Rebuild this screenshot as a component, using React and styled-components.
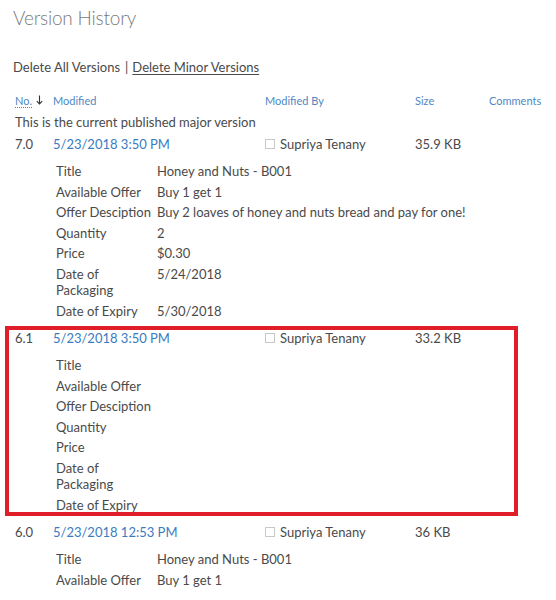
import React from 'react';
import styled, { createGlobalStyle } from 'styled-components';

const versions = [
  {
    no: '7.0',
    modified: '5/23/2018 3:50 PM',
    by: 'Supriya Tenany',
    size: '35.9 KB',
    fields: [
      ['Title', 'Honey and Nuts - B001'],
      ['Available Offer', 'Buy 1 get 1'],
      ['Offer Desciption', 'Buy 2 loaves of honey and nuts bread and pay for one!'],
      ['Quantity', '2'],
      ['Price', '$0.30'],
      ['Date of Packaging', '5/24/2018'],
      ['Date of Expiry', '5/30/2018'],
    ],
  },
  {
    no: '6.1',
    modified: '5/23/2018 3:50 PM',
    by: 'Supriya Tenany',
    size: '33.2 KB',
    highlighted: true,
    fields: [
      ['Title', ''],
      ['Available Offer', ''],
      ['Offer Desciption', ''],
      ['Quantity', ''],
      ['Price', ''],
      ['Date of Packaging', ''],
      ['Date of Expiry', ''],
    ],
  },
  {
    no: '6.0',
    modified: '5/23/2018 12:53 PM',
    by: 'Supriya Tenany',
    size: '36 KB',
    fields: [
      ['Title', 'Honey and Nuts - B001'],
      ['Available Offer', 'Buy 1 get 1'],
    ],
  },
];

const SortArrow = () => (
  <svg width="7" height="10" viewBox="0 0 7 10">
    <path d="M3.5 0.5 V9 M0.8 6.2 L3.5 9 L6.2 6.2" stroke="#333" strokeWidth="1.1" fill="none" />
  </svg>
);

const App = () => {
  return (
    <Page>
      <GlobalStyle />
      <Title>Version History</Title>
      <Actions>
        <span>Delete All Versions</span>
        <Divider>|</Divider>
        <ActionLink>Delete Minor Versions</ActionLink>
      </Actions>
      <Table>
        <HeaderRow>
          <HeaderCell>
            <NoLink>No.</NoLink>
            <SortArrow />
          </HeaderCell>
          <HeaderCell>Modified</HeaderCell>
          <HeaderCell>Modified By</HeaderCell>
          <HeaderCell>Size</HeaderCell>
          <HeaderCell>Comments</HeaderCell>
        </HeaderRow>
        <Note>This is the current published major version</Note>
        {versions.map((v) => (
          <Group key={v.no} highlighted={v.highlighted}>
            <VersionRow>
              <span>{v.no}</span>
              <DateLink>{v.modified}</DateLink>
              <Author>
                <Check />
                {v.by}
              </Author>
              <span>{v.size}</span>
              <span />
            </VersionRow>
            <Details>
              {v.fields.map(([label, value]) => (
                <DetailRow key={label}>
                  <Label>{label}</Label>
                  <span>{value}</span>
                </DetailRow>
              ))}
            </Details>
          </Group>
        ))}
      </Table>
    </Page>
  );
};

const GlobalStyle = createGlobalStyle`
  body {
    margin: 0;
    background: #ffffff;
    font-family: "Segoe UI", Lato, sans-serif;
    color: #4a4a4a;
  }
`;

const Page = styled.div`
  width: 556px;
  height: 600px;
  overflow: hidden;
  padding: 5px 0 0 13px;
  box-sizing: border-box;
`;

const Title = styled.h1`
  margin: 0;
  font-size: 19px;
  line-height: 26px;
  font-weight: 300;
  letter-spacing: -0.2px;
  color: #7a7a7a;
`;

const Actions = styled.div`
  margin-top: 26px;
  font-size: 13px;
  line-height: 20px;
  color: #4a4a4a;
`;

const Divider = styled.span`
  margin: 0 4px 0 5px;
`;

const ActionLink = styled.span`
  text-decoration: underline;
  text-underline-offset: 2px;
`;

const Table = styled.div`
  margin: 12px 0 0 2px;
  font-size: 13px;
`;

const columns = '38px 212px 150px 74px 1fr';

const HeaderRow = styled.div`
  display: grid;
  grid-template-columns: ${columns};
  height: 22px;
  align-items: center;
`;

const HeaderCell = styled.div`
  display: flex;
  align-items: center;
  gap: 4px;
  font-size: 11px;
  color: #4f88c4;
`;

const NoLink = styled.span`
  text-decoration: underline dotted;
  text-underline-offset: 2px;
`;

const Note = styled.div`
  height: 22px;
  line-height: 22px;
  color: #4a4a4a;
`;

const Group = styled.div`
  position: relative;

  &::after {
    content: '';
    display: ${(props) => (props.highlighted ? 'block' : 'none')};
    position: absolute;
    top: -1px;
    bottom: 5px;
    left: -10px;
    right: 38px;
    border: 4px solid #e01e2a;
    pointer-events: none;
  }
`;

const VersionRow = styled.div`
  display: grid;
  grid-template-columns: ${columns};
  height: 22px;
  align-items: center;
  color: #4a4a4a;
`;

const DateLink = styled.span`
  color: #3a7bbf;
`;

const Author = styled.span`
  display: flex;
  align-items: center;
  gap: 5px;
`;

const Check = styled.span`
  width: 10px;
  height: 10px;
  border: 1px solid #c8c8c8;
  box-sizing: border-box;
`;

const Details = styled.div`
  padding: 6px 0 6px 41px;
`;

const DetailRow = styled.div`
  display: grid;
  grid-template-columns: 101px 1fr;
  padding: 2px 0;
  line-height: 16.5px;
  color: #4a4a4a;
`;

const Label = styled.span`
  padding-right: 4px;
`;

export default App;
